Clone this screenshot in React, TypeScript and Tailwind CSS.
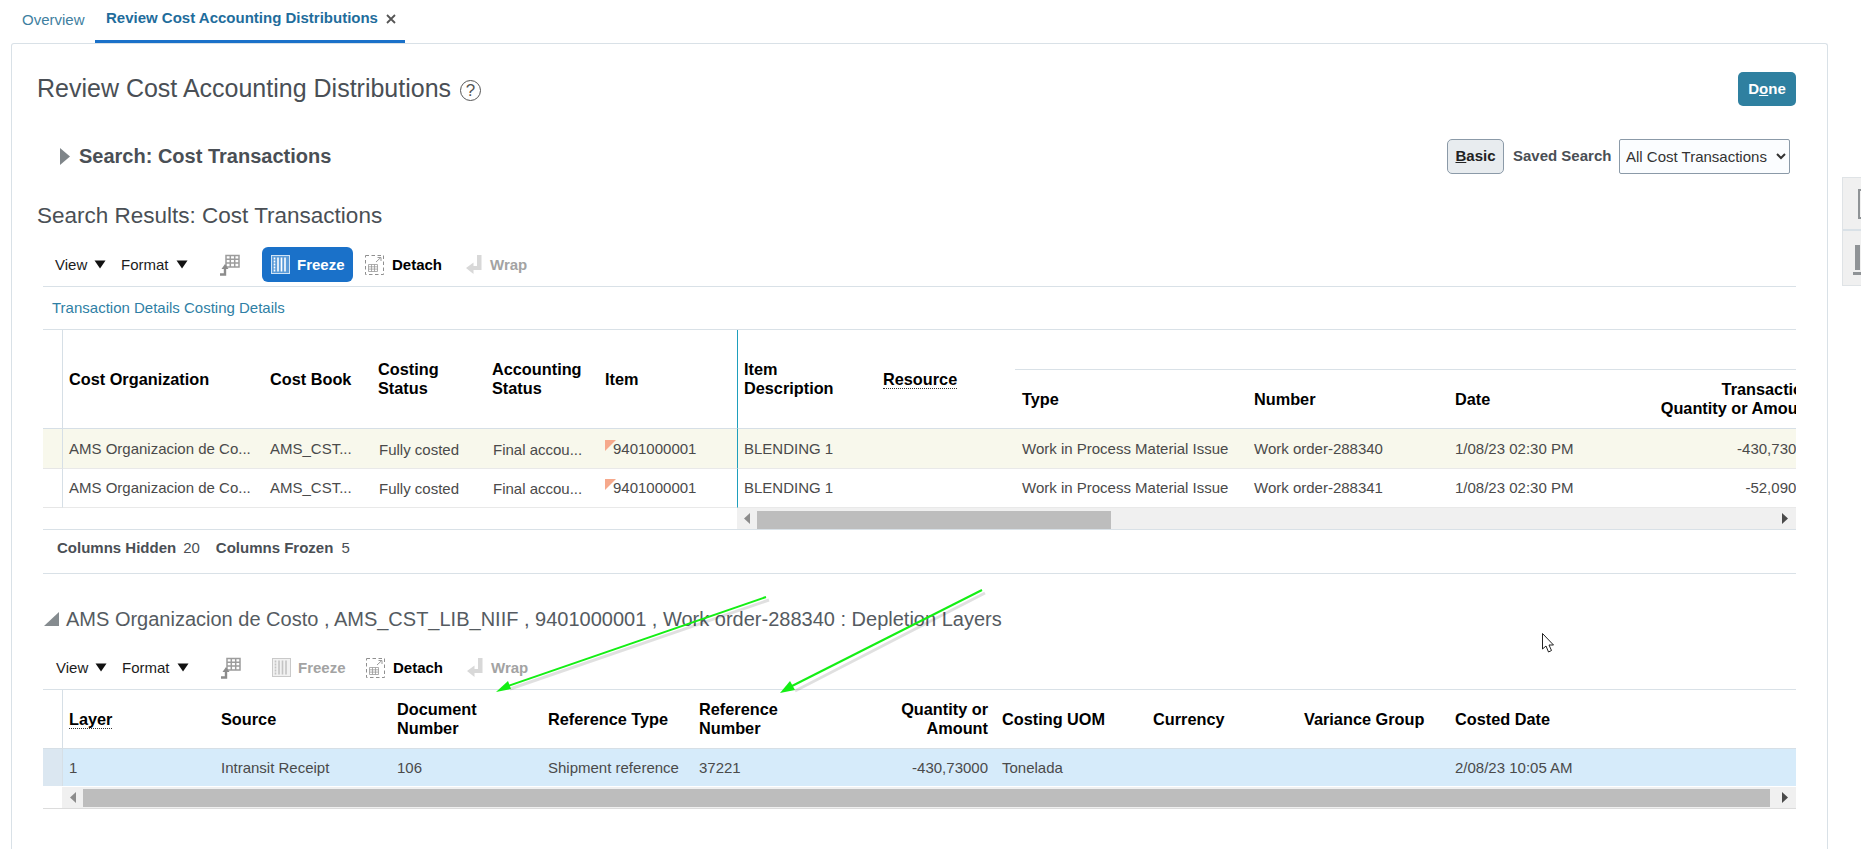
import React from "react";

const Caret = () => (
  <svg width="12" height="9" viewBox="0 0 12 9" className="shrink-0">
    <path d="M0.5 0.5H11.5L6 8.5Z" fill="#111" />
  </svg>
);

const ColsIcon = () => (
  <svg width="21" height="22" viewBox="0 0 21 22" className="shrink-0">
    <g fill="none" stroke="#9c9c9c" strokeWidth="1.5">
      <path d="M7 1.5H20V13H7Z" />
      <path d="M7 5.3H20M7 9.1H20M11.3 1.5V13M15.7 1.5V13" />
    </g>
    <path d="M1 20.5H6V14" fill="none" stroke="#8c8c8c" strokeWidth="2.4" />
    <path d="M2.5 15L6 10L9.5 15Z" fill="#8c8c8c" />
  </svg>
);

const FreezeIcon = ({ on }: { on: boolean }) => {
  const c = on ? "#cfe3f5" : "#c9c9c9";
  return (
    <svg width="19" height="19" viewBox="0 0 19 19" className="shrink-0">
      <rect x="0.5" y="0.5" width="18" height="18" fill={on ? "#5b9bd8" : "#f1f1f1"} stroke={c} />
      <g stroke={on ? "#fff" : "#c4c4c4"} strokeWidth="1.6">
        <path d="M3.5 2.5V16.5" strokeDasharray="2 1" />
        <path d="M7 2.5V16.5M10.5 2.5V16.5M14 2.5V16.5" />
      </g>
    </svg>
  );
};

const DetachIcon = () => (
  <svg width="19" height="20" viewBox="0 0 19 20" className="shrink-0">
    <rect x="0.5" y="0.5" width="18" height="19" fill="none" stroke="#8f8f8f" strokeDasharray="3.5 2.5" />
    <path d="M11 7L15.5 2.8M12.5 2.5H16V6" fill="none" stroke="#9a9a9a" />
    <g fill="none" stroke="#999" strokeWidth="0.8">
      <path d="M3.5 9.5H12.5V16.5H3.5Z" />
      <path d="M3.5 11.8H12.5M3.5 14.1H12.5M6.5 9.5V16.5M9.5 9.5V16.5" />
    </g>
  </svg>
);

const WrapIcon = () => (
  <svg width="16" height="19" viewBox="0 0 16 19" className="shrink-0">
    <path d="M11 0H15.5V15H7.5V19L0 13L7.5 7.5V11H11Z" fill="#d8d8d8" />
  </svg>
);

const Toolbar = ({ active }: { active: boolean }) => (
  <div className="flex items-center h-[35px] pl-[12px] text-[15px] text-[#1c1c1c]">
    <div className="flex items-center gap-[7px] w-[66px]">
      <span className="mt-[1px]">View</span>
      <Caret />
    </div>
    <div className="flex items-center gap-[7px] w-[98px]">
      <span className="mt-[1px]">Format</span>
      <Caret />
    </div>
    <div className="w-[43px] flex">
      <ColsIcon />
    </div>
    <div
      className={
        active
          ? "flex items-center gap-[7px] w-[91px] h-[35px] pl-[9px] rounded-[6px] bg-[#1a71c9] text-white font-bold"
          : "flex items-center gap-[7px] w-[91px] h-[35px] pl-[9px] text-[#a3a3a3] font-bold"
      }
    >
      <FreezeIcon on={active} />
      <span className="mt-[1px]">Freeze</span>
    </div>
    <div className="flex items-center gap-[8px] ml-[12px] w-[101px] font-bold text-black">
      <DetachIcon />
      <span className="mt-[1px]">Detach</span>
    </div>
    <div className="flex items-center gap-[8px] font-bold text-[#a3a3a3]">
      <WrapIcon />
      <span className="mt-[1px]">Wrap</span>
    </div>
  </div>
);

const ItemFlag = () => (
  <svg width="11" height="11" viewBox="0 0 11 11" className="shrink-0 -mr-[3px] -mt-[8px]">
    <path d="M0 0H11L0 11Z" fill="#f6a98c" />
  </svg>
);

const ScrollLeft = () => (
  <svg width="6" height="11" viewBox="0 0 6 11">
    <path d="M6 0V11L0 5.5Z" fill="#8c8c8c" />
  </svg>
);

const ScrollRight = () => (
  <svg width="6" height="11" viewBox="0 0 6 11">
    <path d="M0 0V11L6 5.5Z" fill="#4a4a4a" />
  </svg>
);

const top = [
  "w-[201px] pl-[6px]",
  "w-[108px] pl-[6px]",
  "w-[112px] pl-[6px]",
  "w-[114px] pl-[8px]",
  "w-[140px] pl-[7px] border-r border-r-[#1e9fbd]",
  "w-[139px] pl-[6px]",
  "w-[138px] pl-[6px]",
  "w-[232px] pl-[7px]",
  "w-[201px] pl-[7px]",
  "w-[200px] pl-[7px]",
  "w-[170px] pr-[5px] justify-end",
];

const rowData = [
  ["AMS Organizacion de Co...", "AMS_CST...", "Fully costed", "Final accou...", "9401000001", "BLENDING 1", "", "Work in Process Material Issue", "Work order-288340", "1/08/23 02:30 PM", "-430,73000"],
  ["AMS Organizacion de Co...", "AMS_CST...", "Fully costed", "Final accou...", "9401000001", "BLENDING 1", "", "Work in Process Material Issue", "Work order-288341", "1/08/23 02:30 PM", "-52,09000"],
];

const H = ({ cls, children }: { cls: string; children?: React.ReactNode }) => (
  <div className={`${cls} flex items-center shrink-0 h-full border-b border-b-[#d6dfe6]`}>
    <div className="leading-[19px]">{children}</div>
  </div>
);

const bottomCols = [
  "w-[150px] pl-[6px]",
  "w-[176px] pl-[8px]",
  "w-[152px] pl-[8px]",
  "w-[151px] pl-[7px]",
  "w-[151px] pl-[7px]",
  "w-[151px] pr-[6px] justify-end text-right",
  "w-[152px] pl-[8px]",
  "w-[151px] pl-[7px]",
  "w-[151px] pl-[7px]",
  "w-[150px] pl-[7px]",
  "w-[198px]",
];

const bottomHead: React.ReactNode[] = [
  <span className="border-b border-dotted border-b-[#333]">Layer</span>,
  "Source",
  <>Document<br />Number</>,
  "Reference Type",
  <>Reference<br />Number</>,
  <>Quantity or<br />Amount</>,
  "Costing UOM",
  "Currency",
  "Variance Group",
  "Costed Date",
  "",
];

const bottomRow = ["1", "Intransit Receipt", "106", "Shipment reference", "37221", "-430,73000", "Tonelada", "", "", "2/08/23 10:05 AM", ""];

export default function App() {
  return (
    <div className="relative w-full h-[850px] overflow-hidden bg-white font-['Liberation_Sans',Arial,sans-serif] text-[#333]">
      <div className="flex h-[44px] items-start">
        <div className="ml-[22px] w-[73px] h-[40px] flex items-center text-[15px] text-[#3f7f9f]">Overview</div>
        <div className="w-[310px] h-[43px] pb-[3px] flex items-center pl-[11px] border-b-[3px] border-b-[#1a71c9] text-[15px] font-bold text-[#1f6d9c]">
          <span>Review Cost Accounting Distributions</span>
          <svg width="10" height="10" viewBox="0 0 10 10" className="ml-[8px]">
            <path d="M1 1L9 9M9 1L1 9" stroke="#555" strokeWidth="1.8" />
          </svg>
        </div>
      </div>

      <div className="ml-[11px] w-[1817px] h-[806px] border border-[#d9e1e7] border-b-0 rounded-t-[3px] -mt-[1px]">
        <div className="pl-[25px] pr-[31px]">
          <div className="mt-[28px] h-[34px] flex items-center justify-between">
            <div className="flex items-center gap-[9px]">
              <h1 className="text-[25px] font-normal text-[#4a4f55]">Review Cost Accounting Distributions</h1>
              <div className="mt-[3px] w-[21px] h-[21px] rounded-full border-[1.5px] border-[#555] flex items-center justify-center text-[17px] text-[#555]">?</div>
            </div>
            <button className="w-[58px] h-[34px] rounded-[5px] bg-[#2f80a0] text-white text-[15px] font-bold">
              D<u>o</u>ne
            </button>
          </div>

          <div className="mt-[33px] h-[35px] flex items-center justify-between pr-[6px]">
            <div className="flex items-center pl-[23px] gap-[9px]">
              <svg width="10" height="17" viewBox="0 0 10 17">
                <path d="M0 0L10 8.5L0 17Z" fill="#7f8589" />
              </svg>
              <span className="text-[20px] font-bold text-[#4a4f55] -mt-[1px]">Search: Cost Transactions</span>
            </div>
            <div className="flex items-center">
              <button className="w-[57px] h-[35px] rounded-[5px] border border-[#8b9aa8] bg-[#e8ecef] text-[15px] font-bold text-[#222]">
                <u>B</u>asic
              </button>
              <span className="ml-[9px] w-[106px] text-[15px] font-bold text-[#4a4f55]">Saved Search</span>
              <select className="w-[171px] h-[35px] pl-[2px] rounded-[2px] border border-[#8b9aa8] bg-[#fbfdff] text-[15px] text-[#333]">
                <option>All Cost Transactions</option>
              </select>
            </div>
          </div>

          <h2 className="mt-[25px] h-[30px] pt-[3px] flex items-center text-[22.5px] font-normal text-[#4a4f55]">Search Results: Cost Transactions</h2>

          <div className="ml-[6px]">
            <div className="h-[58px] pt-[18px] border-b border-b-[#d9e1e7]">
              <Toolbar active={true} />
            </div>
            <div className="h-[43px] flex items-center pl-[9px] border-b border-b-[#d9e1e7] text-[15px] text-[#2f7fa5]">
              Transaction Details Costing Details
            </div>

            <div className="overflow-hidden w-[1753px]">
              <div className="flex h-[99px] w-[1790px] text-[16.3px] font-bold text-black">
                <div className="w-[20px] shrink-0 border-r border-r-[#d6dfe6] border-b border-b-[#d6dfe6]" />
                <H cls={top[0]}>Cost Organization</H>
                <H cls={top[1]}>Cost Book</H>
                <H cls={top[2]}>Costing<br />Status</H>
                <H cls={top[3]}>Accounting<br />Status</H>
                <H cls={top[4]}>Item</H>
                <H cls={top[5]}>Item<br />Description</H>
                <H cls={top[6]}>
                  <span className="border-b border-dotted border-b-[#333]">Resource</span>
                </H>
                <div className="flex flex-col h-full">
                  <div className="h-[39px]" />
                  <div className="flex-1 flex min-h-0 border-t border-t-[#d9e1e7]">
                    <H cls={top[7]}>Type</H>
                    <H cls={top[8]}>Number</H>
                    <H cls={top[9]}>Date</H>
                    <H cls={`${top[10]} pr-[4px] text-right`}>Transaction<br />Quantity or Amount</H>
                  </div>
                </div>
              </div>

              {rowData.map((r, i) => (
                <div key={i} className={i === 0 ? "flex h-[40px] w-[1790px] bg-[#f8f8ec] text-[15px] text-[#4a4a4a]" : "flex h-[39px] w-[1790px] text-[15px] text-[#4a4a4a]"}>
                  <div className="w-[20px] shrink-0 border-r border-r-[#d6dfe6] border-b border-b-[#e6e6e6]" />
                  {r.map((c, j) => (
                    <div key={j} className={`${top[j]} ${i === 0 ? "pt-[1px]" : ""} shrink-0 flex items-center h-full border-b border-b-[#e9e9e9] whitespace-nowrap`}>
                      {j === 4 && <ItemFlag />}
                      <span className={j === 2 || j === 3 ? "mt-[2px] ml-[1px]" : ""}>{c}</span>
                    </div>
                  ))}
                </div>
              ))}

              <div className="flex h-[22px] border-b border-b-[#d9e1e7]">
                <div className="w-[694px] shrink-0" />
                <div className="flex-1 flex items-center bg-[#f0f0f0] relative">
                  <div className="w-[20px] flex justify-center"><ScrollLeft /></div>
                  <div className="w-[354px] h-[18px] self-end bg-[#bdbdbd]" />
                  <div className="flex-1 flex justify-end pr-[8px]"><ScrollRight /></div>
                </div>
              </div>
            </div>

            <div className="h-[44px] flex items-center pl-[14px] pb-[7px] border-b border-b-[#d9e1e7] text-[15px] text-[#4a4f55]">
              <span className="font-bold">Columns Hidden</span>
              <span className="ml-[7px]">20</span>
              <span className="ml-[16px] font-bold">Columns Frozen</span>
              <span className="ml-[8px]">5</span>
            </div>

            <div className="mt-[30px] h-[30px] flex items-center gap-[7px] pl-[1px]">
              <svg width="15" height="14" viewBox="0 0 15 14">
                <path d="M15 0V14H0Z" fill="#858b8f" />
              </svg>
              <span className="text-[20px] text-[#555b61]">AMS Organizacion de Costo , AMS_CST_LIB_NIIF , 9401000001 , Work order-288340 : Depletion Layers</span>
            </div>

            <div className="h-[56px] pt-[16px] pl-[1px] border-b border-b-[#d9e1e7]">
              <Toolbar active={false} />
            </div>

            <div className="overflow-hidden w-[1753px]">
              <div className="flex h-[59px] w-[1790px] text-[16.3px] font-bold text-black">
                <div className="w-[20px] shrink-0 border-r border-r-[#d6dfe6] border-b border-b-[#d6dfe6]" />
                {bottomHead.map((c, i) => (
                  <H key={i} cls={bottomCols[i]}>{c}</H>
                ))}
              </div>
              <div className="flex h-[37px] w-[1790px] bg-[#d6ebfa] text-[15px] text-[#4a4a4a]">
                <div className="w-[20px] shrink-0 border-r border-r-[#d6dfe6] bg-[#dbe7f1]" />
                {bottomRow.map((c, i) => (
                  <div key={i} className={`${bottomCols[i]} shrink-0 pt-[1px] flex items-center whitespace-nowrap`}>{c}</div>
                ))}
              </div>
              <div className="flex h-[23px] pt-[1px] border-b border-b-[#dcdcdc]">
                <div className="w-[19px] shrink-0" />
                <div className="flex-1 flex items-center bg-[#f0f0f0]">
                  <div className="w-[21px] flex justify-center"><ScrollLeft /></div>
                  <div className="flex-1 h-[18px] bg-[#bdbdbd]" />
                  <div className="w-[26px] flex justify-end pr-[8px]"><ScrollRight /></div>
                </div>
              </div>
            </div>
          </div>
        </div>
      </div>

      <div className="absolute left-[1842px] top-[177px] w-[19px] h-[109px] bg-[#f0f0f0] border border-[#dfe3e6] border-r-0">
        <div className="h-[53px] border-b-2 border-b-[#d9e1e7] pt-[11px] pl-[15px]">
          <div className="w-[8px] h-[30px] border-2 border-r-0 border-[#8f9396]" />
        </div>
        <div className="pt-[14px] pl-[10px]">
          <div className="ml-[2px] w-[5px] h-[25px] bg-[#8f9396]" />
          <div className="mt-[2px] w-[10px] h-[3px] bg-[#8f9396]" />
        </div>
      </div>

      <svg className="absolute left-0 top-0 pointer-events-none" width="1861" height="850" viewBox="0 0 1861 850">
        <g stroke="#000" strokeOpacity="0.12" strokeWidth="3" fill="none">
          <path d="M769 600L510 689" />
          <path d="M985 593L795 691" />
        </g>
        <g stroke="#14ee14" strokeWidth="2" fill="none">
          <path d="M766 597L505 687" />
          <path d="M982 590L790 687" />
        </g>
        <path d="M496 692L508 681L511 689Z" fill="#14ee14" />
        <path d="M780 693L790 681L795 690Z" fill="#14ee14" />
        <path d="M1542.5 633.5V649L1546 646L1548.5 652L1551.5 650.5L1549 645L1553.5 645Z" fill="#fff" stroke="#222" strokeWidth="1" />
      </svg>
    </div>
  );
}
